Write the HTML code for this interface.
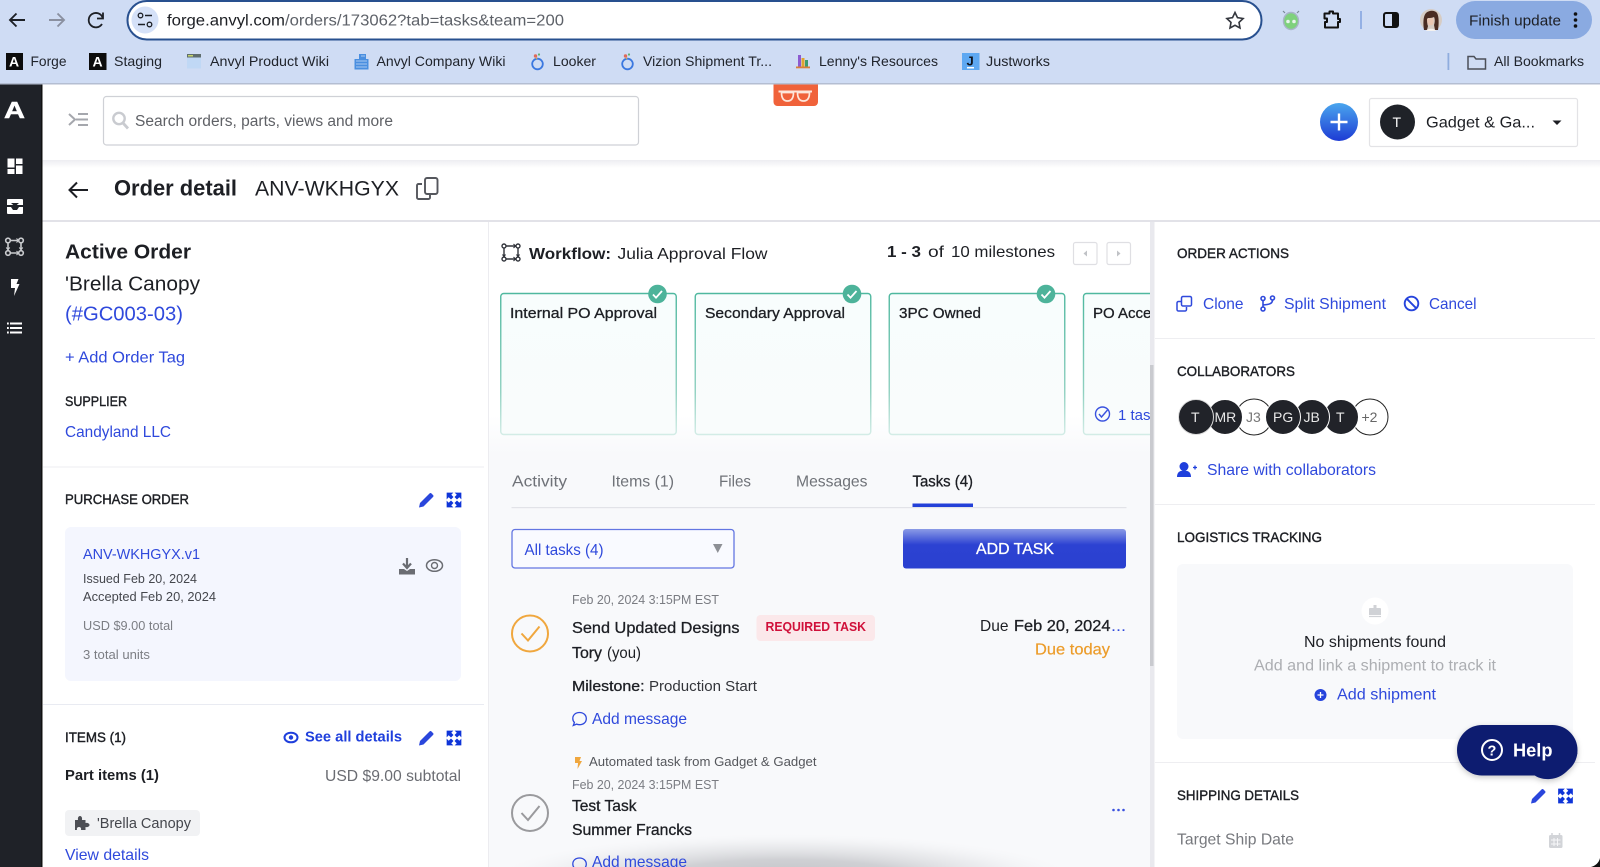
<!DOCTYPE html>
<html lang="en"><head><meta charset="utf-8"><title>Order detail</title>
<style>
html,body{margin:0;padding:0;background:#fff;width:1600px;height:867px;overflow:hidden}
.wrap{position:absolute;left:0;top:0;width:1600px;height:867px;overflow:hidden}
svg{display:block;filter:blur(.35px)}
text{font-family:"Liberation Sans",sans-serif;font-size:16px;fill:#1d1f24}
.b{font-weight:700}
.m{stroke:#1d1f24;stroke-width:.3px}
.bl{fill:#2f49dc}
.g{fill:#777}
.h{font-size:14px;fill:#1d1f24;stroke:#1d1f24;stroke-width:.4px}
.bm{font-size:14px;fill:#20242c}
.ab{fill:#0f40dc}
</style></head><body>
<div class="wrap">
<svg width="1600" height="867" viewBox="0 0 1600 867" xmlns="http://www.w3.org/2000/svg">
<defs>
<linearGradient id="pg" x1="0" y1="0" x2="0" y2="1"><stop offset="0" stop-color="#4aa6ee"/><stop offset="1" stop-color="#1d3bd4"/></linearGradient>
<linearGradient id="atg" x1="0" y1="0" x2="0" y2="1"><stop offset="0" stop-color="#8b9be6"/><stop offset=".4" stop-color="#2c42d2"/><stop offset="1" stop-color="#2a40d0"/></linearGradient>
<linearGradient id="cs" x1="0" y1="0" x2="0" y2="1"><stop offset="0" stop-color="#4fb89f"/><stop offset=".7" stop-color="#8fd0c0"/><stop offset="1" stop-color="#d3ece6"/></linearGradient>
<linearGradient id="cbg" x1="0" y1="0" x2="0" y2="1"><stop offset="0" stop-color="#fff"/><stop offset=".3" stop-color="#fff"/><stop offset=".36" stop-color="#f8f9fb"/><stop offset="1" stop-color="#f8f9fb"/></linearGradient>
<linearGradient id="cf" x1="0" y1="0" x2="0" y2="1"><stop offset="0" stop-color="#f8fdfd"/><stop offset="1" stop-color="#f9fcfc"/></linearGradient>
<linearGradient id="sh" x1="0" y1="0" x2="0" y2="1"><stop offset="0" stop-color="#e9e9ee"/><stop offset="1" stop-color="#fff"/></linearGradient>
<radialGradient id="blob" gradientUnits="userSpaceOnUse" cx="0" cy="0" r="1" gradientTransform="translate(785 880) scale(290 46)"><stop offset="0" stop-color="#bfc0c4"/><stop offset=".45" stop-color="#c8c9cd" stop-opacity=".85"/><stop offset=".75" stop-color="#dcdde0" stop-opacity=".45"/><stop offset="1" stop-color="#f0f0f2" stop-opacity="0"/></radialGradient>
<clipPath id="cc"><rect x="489" y="222" width="661" height="645"/></clipPath>
<filter id="hs" x="-20%" y="-30%" width="140%" height="170%"><feDropShadow dx="0" dy="2" stdDeviation="3" flood-color="#000" flood-opacity=".22"/></filter>
<g id="pencil"><path d="M0 15.500l1-4.500L10.500 1.500a1.400 1.400 0 0 1 2 0l1.500 1.500a1.400 1.400 0 0 1 0 2L4.500 14.500z" fill="#2a46dc"/></g>
<g id="expand" fill="#0f35d8" stroke="#0f35d8" stroke-width=".7"><path d="M0 0h5.500L3.800 1.700 6 4 4 6 1.700 3.800 0 5.500zM14 0v5.500L12.300 3.800 10 6 8 4 10.300 1.700 8.500 0zM0 14V8.500l1.700 1.700L4 8l2 2-2.200 2.300L5.500 14zM14 14H8.500l1.700-1.700L8 10l2-2 2.300 2.200L14 8.500z"/></g>
<g id="chk"><circle r="9.300" fill="#4db39a"/><path d="M-4.500 .5l3 3.200 6-6.700" fill="none" stroke="#fff" stroke-width="1.800"/></g>
<g id="chat"><path d="M7.500 1C3.500 1 .8 3.500 .8 7c0 1.600.6 3 1.600 4L1.300 14l3.300-1.400c.9.400 1.900.6 2.900.6 4 0 6.800-2.600 6.800-6.100S11.500 1 7.500 1z" fill="none" stroke="#2f49dc" stroke-width="1.300"/></g>
</defs>

<!-- page -->
<rect width="1600" height="867" fill="#fff"/>

<!-- browser chrome -->
<rect width="1600" height="84" fill="#cfdcf4"/>
<rect y="83" width="1600" height="1.500" fill="#b4bed2"/>
<rect x="127.500" y="1" width="1134" height="38.500" rx="19.250" fill="#fff" stroke="#28508f" stroke-width="2"/>
<path d="M25 20H10.500M16.500 13.500L10 20l6.500 6.500" fill="none" stroke="#1d2026" stroke-width="1.900"/>
<path d="M49 20H63.500M57.500 13.500L64 20l-6.500 6.500" fill="none" stroke="#8a90a0" stroke-width="1.900"/>
<path d="M102 24a7.200 7.200 0 1 1 .6-6.500M103 12.500v6h-6" fill="none" stroke="#1d2026" stroke-width="1.800"/>
<circle cx="145" cy="20" r="13.500" fill="#d5e1f8"/>
<circle cx="140.500" cy="15.500" r="2.300" fill="none" stroke="#1d2026" stroke-width="1.300"/><path d="M145 15.500h7M138 24.500h7" stroke="#1d2026" stroke-width="1.500"/><circle cx="149.500" cy="24.500" r="2.300" fill="none" stroke="#1d2026" stroke-width="1.300"/>
<text x="167" y="25.500" textLength="118" lengthAdjust="spacingAndGlyphs" style="font-size:15.500px" fill="#1d1f24">forge.anvyl.com</text>
<text x="285" y="25.500" textLength="279" lengthAdjust="spacingAndGlyphs" style="font-size:15.500px;fill:#5d6168">/orders/173062?tab=tasks&amp;team=200</text>
<path d="M1235 12.500l2.500 5.200 5.600.8-4.100 3.900 1 5.600-5-2.700-5 2.700 1-5.600-4.100-3.900 5.600-.8z" fill="none" stroke="#33363d" stroke-width="1.600"/>

<g>
<path d="M1285 13l-2-2M1297 13l2-2" stroke="#7a8a96" stroke-width="1.200"/>
<ellipse cx="1291" cy="21" rx="7.500" ry="8.500" fill="#7fd17d" stroke="#a8b4c8" stroke-width="1.400"/>
<circle cx="1288" cy="21.500" r="1.800" fill="#e8f4ec"/><circle cx="1294" cy="21.500" r="1.800" fill="#e8f4ec"/>
</g>
<path d="M1324.500 13.500h5v-2h3.500v2h5v5.500h2v3h-2v5.500h-13v-5.500h2v-3.500h-2.500z" fill="none" stroke="#111" stroke-width="2" stroke-linejoin="round"/>
<rect x="1360" y="11" width="2" height="18" fill="#94b0e4"/>
<rect x="1384" y="13" width="14" height="14" rx="2" fill="#cfdcf4" stroke="#111" stroke-width="2"/><rect x="1392" y="13" width="6" height="14" fill="#111"/>
<circle cx="1431" cy="20" r="11" fill="#d6ccc4"/>
<path d="M1424 30c-1-6-1-14 2-17s9-3 11 0 2 11 1 17h-3l-1-5c1-3 1-6 0-8-2 1-4 1-6 1-1 3-1 6 0 8l-1 4z" fill="#4a2c22"/>
<path d="M1427 18.500c1 0 4 0 6-1 1 2 1 4 0 7-1 1-4 1-5 0-1-2-1-4-1-6z" fill="#e9c6b2"/>
<path d="M1426 31c1-3 9-3 10 0z" fill="#f4f1ee"/>
<rect x="1456" y="1" width="136" height="38" rx="19" fill="#8aaae1"/>
<text x="1469" y="25.500" textLength="92" lengthAdjust="spacingAndGlyphs" style="font-size:15px" fill="#1d1f24">Finish update</text>
<circle cx="1575.500" cy="14" r="1.800" fill="#111"/><circle cx="1575.500" cy="20" r="1.800" fill="#111"/><circle cx="1575.500" cy="26" r="1.800" fill="#111"/>

<!-- bookmarks -->
<rect x="6" y="53" width="17" height="17" fill="#0c0c0c"/><text x="9" y="66.500" class="b" style="font-size:14px;fill:#fff">A</text>
<text x="30.500" y="66" class="bm" textLength="36" lengthAdjust="spacingAndGlyphs">Forge</text>
<rect x="89" y="53" width="17.500" height="17" fill="#0c0c0c"/><text x="92.500" y="66.500" class="b" style="font-size:14px;fill:#fff">A</text>
<text x="114" y="66" class="bm" textLength="48" lengthAdjust="spacingAndGlyphs">Staging</text>
<rect x="187" y="54" width="14" height="3.500" fill="#5f6d6d"/><rect x="187" y="57.500" width="14" height="11" fill="#c0d8f5"/><rect x="188" y="55" width="5" height="1.500" fill="#c4d46a"/>
<text x="210" y="66" class="bm" textLength="119" lengthAdjust="spacingAndGlyphs">Anvyl Product Wiki</text>
<rect x="359" y="54" width="7" height="15" fill="#4a8fe0"/><rect x="354.500" y="59" width="14" height="10.500" fill="#4a8fe0"/><path d="M356 61h11M356 64h11M356 67h11M361 56h4" stroke="#a9c9f1" stroke-width=".9"/>
<text x="376.500" y="66" class="bm" textLength="129" lengthAdjust="spacingAndGlyphs">Anvyl Company Wiki</text>
<circle cx="537.500" cy="64" r="5.300" fill="none" stroke="#3b78e0" stroke-width="1.800"/><circle cx="535.500" cy="56" r="1.700" fill="#e06b5a"/><circle cx="539" cy="54.500" r="1.100" fill="#5bb36a"/><path d="M536 58l1 1" stroke="#e2a93b" stroke-width="1.300"/>
<text x="553" y="66" class="bm" textLength="43" lengthAdjust="spacingAndGlyphs">Looker</text>
<circle cx="627.500" cy="64" r="5.300" fill="none" stroke="#3b78e0" stroke-width="1.800"/><circle cx="625.500" cy="56" r="1.700" fill="#e06b5a"/><circle cx="629" cy="54.500" r="1.100" fill="#5bb36a"/><path d="M626 58l1 1" stroke="#e2a93b" stroke-width="1.300"/>
<text x="643" y="66" class="bm" textLength="129" lengthAdjust="spacingAndGlyphs">Vizion Shipment Tr...</text>
<rect x="798" y="55" width="3" height="12" fill="#8c5bd0"/><rect x="801.500" y="58" width="3" height="9" fill="#e0a42e"/><rect x="805" y="60" width="3" height="7" fill="#3f9b6f"/><rect x="796" y="66.500" width="14" height="1.800" fill="#d87f3a"/>
<text x="819" y="66" class="bm" textLength="119" lengthAdjust="spacingAndGlyphs">Lenny's Resources</text>
<rect x="962" y="53" width="17.500" height="17" fill="#5ea8f2"/><text x="966.500" y="65.500" class="b" style="font-size:13px;fill:#10141d">J</text><rect x="967" y="67" width="7" height="1.500" fill="#fff"/>
<text x="986" y="66" class="bm" textLength="64" lengthAdjust="spacingAndGlyphs">Justworks</text>
<rect x="1447.500" y="53" width="1.800" height="17" fill="#8fadde"/>
<path d="M1468 56.500h6l2 2.500h9.500v10H1468z" fill="none" stroke="#4b4f58" stroke-width="1.500"/>
<text x="1494" y="66" class="bm" textLength="90" lengthAdjust="spacingAndGlyphs">All Bookmarks</text>

<!-- sidebar -->
<rect x="0" y="84.500" width="42" height="783" fill="#1f2228"/>
<rect x="41" y="84.500" width="1.500" height="783" fill="#111"/>
<text x="4" y="118" class="b" style="font-size:23px;fill:#fff;stroke:#fff;stroke-width:.5px" textLength="21" lengthAdjust="spacingAndGlyphs">A</text>
<path d="M7.500 158.500h7v9h-7zM16 158.500h6.500v5.500H16zM16 165.500h6.500v8.500H16zM7.500 169h7v5h-7z" fill="#fff"/>
<path d="M8 199h14a1 1 0 0 1 1 1v5H7v-5a1 1 0 0 1 1-1zM7 207h4l2 3h4l2-3h4v6a1 1 0 0 1-1 1H8a1 1 0 0 1-1-1z" fill="#fff"/><path d="M11 203h8l-4 3.500z" fill="#1f2228"/>
<g fill="none" stroke="#c9cbce" stroke-width="1.600"><circle cx="8" cy="240.500" r="2.300"/><circle cx="21" cy="240.500" r="2.300"/><circle cx="8" cy="253" r="2.300"/><circle cx="21" cy="253" r="2.300"/><path d="M10.500 240.500h8M10.500 253h8M8 243v7.500M21 243v7.500"/><path d="M16.500 238.500l2 2-2 2M16.500 251l2 2-2 2M6.200 247.500l1.800 2 1.800-2M19.200 247.500l1.800 2 1.800-2" stroke-width="1.100"/></g>
<path d="M11 279h7.500l-2 5h3L14 296l1-8h-4z" fill="#fff"/>
<path d="M10 323.500h12M10 328h12M10 332.500h12" stroke="#fff" stroke-width="2"/><path d="M7 323.500h1.800M7 328h1.800M7 332.500h1.800" stroke="#fff" stroke-width="2"/>

<!-- top bar -->
<rect x="42.500" y="160" width="1557.500" height="8" fill="url(#sh)" opacity=".8"/>
<path d="M69 114l6 5.500-6 5.500" fill="none" stroke="#a5a7ad" stroke-width="2"/><path d="M78 114h10M76 119.500h12M78 125h10" stroke="#a5a7ad" stroke-width="2"/>
<rect x="103.500" y="96.500" width="535" height="48.500" rx="3" fill="#fff" stroke="#cfd1d6" stroke-width="1.200"/>
<circle cx="119" cy="118.500" r="5.700" fill="none" stroke="#c9cbd0" stroke-width="2.400"/><path d="M123 123l5 5.500" stroke="#c9cbd0" stroke-width="2.800"/>
<text x="135" y="126" textLength="258" lengthAdjust="spacingAndGlyphs" style="font-size:15.500px;fill:#5f6166">Search orders, parts, views and more</text>
<path d="M773.500 84.500h44.500v17.500a4 4 0 0 1-4 4h-36.500a4 4 0 0 1-4-4z" fill="#f0623a"/>
<g fill="none" stroke="#fde6da" stroke-width="1.700"><path d="M781.500 92.500h12c0 5-1.500 8.500-6 8.500s-6-3.500-6-8.500zM797.500 92.500h12c0 5-1.500 8.500-6 8.500s-6-3.500-6-8.500z"/></g><path d="M778.500 90.500h33.500v2h-33.500z" fill="#fde6da"/>

<circle cx="1339" cy="122" r="19" fill="url(#pg)"/><path d="M1339 113.500v17M1330.500 122h17" stroke="#fff" stroke-width="2.400"/>
<rect x="1369.500" y="98.500" width="208" height="48" rx="2" fill="#fff" stroke="#e3e3e6" stroke-width="1.200"/>
<circle cx="1397.500" cy="122" r="17.500" fill="#1f2228"/><text x="1392.500" y="127" style="font-size:14px;fill:#fff">T</text>
<text x="1426" y="127.500" textLength="109" lengthAdjust="spacingAndGlyphs" style="font-size:16px">Gadget &amp; Ga...</text>
<path d="M1552.500 120.500h9l-4.500 4.500z" fill="#1d1f24"/>

<!-- detail header -->
<path d="M88 190H70M77 182.500L69.500 190l7.500 7.500" fill="none" stroke="#1d1f24" stroke-width="2"/>
<text x="114" y="195.500" class="b" textLength="123" lengthAdjust="spacingAndGlyphs" style="font-size:22px">Order detail</text>
<text x="255" y="195.500" textLength="144" lengthAdjust="spacingAndGlyphs" style="font-size:21.500px">ANV-WKHGYX</text>
<path d="M422 184h-3.500a1.500 1.500 0 0 0-1.500 1.500v12a1.500 1.500 0 0 0 1.500 1.500h10a1.500 1.500 0 0 0 1.500-1.500v-3" fill="none" stroke="#55575d" stroke-width="1.900"/><rect x="425" y="178" width="12.500" height="16" rx="2" fill="#fff" stroke="#55575d" stroke-width="1.900"/>
<rect x="42.500" y="220" width="1557.500" height="2" fill="#e2e2e8"/>
<rect x="488" y="222" width="1" height="645" fill="#ececf0"/>

<!-- left column -->
<text x="65" y="258.500" class="b" textLength="126" lengthAdjust="spacingAndGlyphs" style="font-size:20px">Active Order</text>
<text x="65" y="290.500" textLength="135" lengthAdjust="spacingAndGlyphs" style="font-size:20.500px">'Brella Canopy</text>
<text x="65" y="320.500" class="bl" textLength="118" lengthAdjust="spacingAndGlyphs" style="font-size:20.500px">(#GC003-03)</text>
<text x="65" y="362.500" class="bl" textLength="120" lengthAdjust="spacingAndGlyphs">+ Add Order Tag</text>
<text x="65" y="406" class="h" textLength="62" lengthAdjust="spacingAndGlyphs">SUPPLIER</text>
<text x="65" y="437" class="bl" textLength="106" lengthAdjust="spacingAndGlyphs">Candyland LLC</text>
<rect x="43" y="466.500" width="441" height="1" fill="#ededf0"/>
<text x="65" y="504" class="h" textLength="124" lengthAdjust="spacingAndGlyphs">PURCHASE ORDER</text>
<use href="#pencil" x="419" y="492"/><use href="#expand" x="447" y="493"/>
<rect x="65" y="527" width="396" height="154" rx="6" fill="#f4f6fe"/>
<text x="83" y="559" class="bl" textLength="117" lengthAdjust="spacingAndGlyphs" style="font-size:15px">ANV-WKHGYX.v1</text>
<text x="83" y="583" textLength="114" lengthAdjust="spacingAndGlyphs" style="font-size:13px;fill:#45474d">Issued Feb 20, 2024</text>
<text x="83" y="601" textLength="133" lengthAdjust="spacingAndGlyphs" style="font-size:13px;fill:#45474d">Accepted Feb 20, 2024</text>
<text x="83" y="630" textLength="90" lengthAdjust="spacingAndGlyphs" style="font-size:13px;fill:#7c7e84">USD $9.00 total</text>
<text x="83" y="659" textLength="67" lengthAdjust="spacingAndGlyphs" style="font-size:13px;fill:#7c7e84">3 total units</text>
<path d="M407 558v9M403 563.500l4 4.500 4-4.500" fill="none" stroke="#6a6c72" stroke-width="2.200"/><path d="M399 569h5l3 2 3-2h5v5.500h-16z" fill="#6a6c72"/>
<ellipse cx="434.500" cy="565.500" rx="8" ry="5.800" fill="none" stroke="#6a6c72" stroke-width="1.500"/><circle cx="434.500" cy="565.500" r="3" fill="none" stroke="#6a6c72" stroke-width="1.400"/>
<rect x="43" y="704" width="441" height="1" fill="#e9ebf2"/>
<text x="65" y="742" class="h" textLength="61" lengthAdjust="spacingAndGlyphs">ITEMS (1)</text>
<ellipse cx="291" cy="737.500" rx="6.500" ry="4.800" fill="none" stroke="#1f3fdc" stroke-width="2"/><circle cx="291" cy="737.500" r="2.200" fill="#1f3fdc"/>
<text x="305" y="741.500" class="b" textLength="97" lengthAdjust="spacingAndGlyphs" style="font-size:14.500px;fill:#1f3fdc">See all details</text>
<use href="#pencil" x="419" y="730"/><use href="#expand" x="447" y="731"/>
<text x="65" y="780" class="b" textLength="94" lengthAdjust="spacingAndGlyphs" style="font-size:14.500px">Part items (1)</text>
<text x="325" y="781" textLength="136" lengthAdjust="spacingAndGlyphs" style="fill:#6a6c72">USD $9.00 subtotal</text>
<rect x="65" y="810" width="135" height="26" rx="4" fill="#f1f2f4"/>
<path d="M75 820h3c-.5-3 1-4 2-4s2.500 1 2 4h3.500v3c2-.5 4 .5 4 2s-2 2.500-4 2v3H81c.5-2-.5-3-2-3s-2.500 1-2 3h-2z" fill="#4d4f55"/>
<text x="97" y="828" textLength="94" lengthAdjust="spacingAndGlyphs" style="font-size:15px;fill:#44464c">'Brella Canopy</text>
<text x="65" y="860" class="bl" textLength="84" lengthAdjust="spacingAndGlyphs">View details</text>

<!-- center column -->
<rect x="489" y="222" width="661" height="645" fill="url(#cbg)"/>
<g fill="none" stroke="#30333a" stroke-width="1.400"><circle cx="504" cy="246" r="2"/><circle cx="518" cy="246" r="2"/><circle cx="504" cy="259" r="2"/><circle cx="518" cy="259" r="2"/><path d="M506.500 246h9M506.500 259h9M504 248.500v8M518 248.500v8"/><path d="M513.500 244l2 2-2 2M513.500 257l2 2-2 2M502.500 254.500l1.500 2 1.500-2M516.500 254.500l1.500 2 1.500-2" stroke-width="1.100"/></g>
<text x="529" y="259" class="b" textLength="82" lengthAdjust="spacingAndGlyphs">Workflow:</text>
<text x="617.500" y="259" textLength="150" lengthAdjust="spacingAndGlyphs">Julia Approval Flow</text>
<text x="887" y="257" class="b" textLength="34" lengthAdjust="spacingAndGlyphs">1 - 3</text>
<text x="928" y="257" textLength="16" lengthAdjust="spacingAndGlyphs">of</text>
<text x="951" y="257" textLength="104" lengthAdjust="spacingAndGlyphs">10 milestones</text>
<rect x="1073.500" y="242.500" width="23.500" height="22" rx="2" fill="#fff" stroke="#dfdfe3" stroke-width="1.200"/><path d="M1087 250.500v6l-3.500-3z" fill="#c0c2c6"/>
<rect x="1107" y="242.500" width="23.500" height="22" rx="2" fill="#fff" stroke="#dfdfe3" stroke-width="1.200"/><path d="M1117 250.500v6l3.500-3z" fill="#c0c2c6"/>
<g clip-path="url(#cc)">
<rect x="500.750" y="293.500" width="175.500" height="141" rx="3" fill="url(#cf)" stroke="url(#cs)" stroke-width="1.400"/>
<rect x="695.250" y="293.500" width="175.500" height="141" rx="3" fill="url(#cf)" stroke="url(#cs)" stroke-width="1.400"/>
<rect x="889.250" y="293.500" width="175.500" height="141" rx="3" fill="url(#cf)" stroke="url(#cs)" stroke-width="1.400"/>
<rect x="1083.500" y="293.500" width="175.500" height="141" rx="3" fill="url(#cf)" stroke="url(#cs)" stroke-width="1.400"/>
<text x="1093" y="318" class="m" style="font-size:15px">PO Acceptance</text>
<circle cx="1102.500" cy="414" r="7" fill="none" stroke="#3a52df" stroke-width="1.400"/><path d="M1099 414l2.500 3 6-7" fill="none" stroke="#3a52df" stroke-width="1.400"/>
<text x="1118" y="420" class="bl" style="font-size:15px">1 task</text>
</g>
<use href="#chk" x="657.500" y="294"/><use href="#chk" x="852" y="294"/><use href="#chk" x="1046" y="294"/>
<text x="510" y="318" class="m" textLength="147" lengthAdjust="spacingAndGlyphs" style="font-size:15px">Internal PO Approval</text>
<text x="705" y="318" class="m" textLength="140" lengthAdjust="spacingAndGlyphs" style="font-size:15px">Secondary Approval</text>
<text x="899" y="318" class="m" textLength="82" lengthAdjust="spacingAndGlyphs" style="font-size:15px">3PC Owned</text>

<g style="font-size:16px">
<text x="512" y="486.500" textLength="55" lengthAdjust="spacingAndGlyphs" style="fill:#6f7278">Activity</text>
<text x="611.500" y="486.500" textLength="62.500" lengthAdjust="spacingAndGlyphs" style="fill:#6f7278">Items (1)</text>
<text x="719" y="486.500" textLength="32" lengthAdjust="spacingAndGlyphs" style="fill:#6f7278">Files</text>
<text x="796" y="486.500" textLength="71.500" lengthAdjust="spacingAndGlyphs" style="fill:#6f7278">Messages</text>
<text x="912.500" y="486.500" textLength="60.500" lengthAdjust="spacingAndGlyphs" class="m">Tasks (4)</text>
</g>
<rect x="511.500" y="507" width="615" height="1.200" fill="#e2e3e8"/>
<rect x="912.500" y="503.500" width="60.500" height="3.500" fill="#2340d8"/>

<rect x="512" y="529.500" width="222" height="38.500" rx="3" fill="#f9faff" stroke="#6376e2" stroke-width="1.300"/>
<text x="524.500" y="555" class="bl" textLength="79" lengthAdjust="spacingAndGlyphs">All tasks (4)</text>
<path d="M713 544h9.500l-4.750 9z" fill="#8d8f95"/>
<rect x="903" y="529" width="223" height="39.500" rx="3" fill="url(#atg)"/>
<text x="976" y="554" textLength="78" lengthAdjust="spacingAndGlyphs" style="font-size:16px;fill:#fff;stroke:#fff;stroke-width:.3px">ADD TASK</text>

<text x="572" y="604" textLength="147" lengthAdjust="spacingAndGlyphs" style="font-size:13px;fill:#7a7c82">Feb 20, 2024 3:15PM EST</text>
<circle cx="530" cy="633.500" r="18" fill="none" stroke="#f0a73e" stroke-width="2"/><path d="M521.500 633.500l6.500 7 11.500-14" fill="none" stroke="#f0a73e" stroke-width="2"/>
<text x="572" y="633" class="m" textLength="167.500" lengthAdjust="spacingAndGlyphs">Send Updated Designs</text>
<rect x="756.500" y="615" width="118.500" height="26" rx="4" fill="#fbe8ea"/>
<text x="765.500" y="631" class="b" textLength="100.500" lengthAdjust="spacingAndGlyphs" style="font-size:12.500px;fill:#d0103a">REQUIRED TASK</text>
<text x="980" y="631" textLength="28.500" lengthAdjust="spacingAndGlyphs">Due</text>
<text x="1014" y="631" class="m" textLength="96.500" lengthAdjust="spacingAndGlyphs">Feb 20, 2024</text>
<text x="1111" y="631" class="bl" textLength="15" lengthAdjust="spacingAndGlyphs">...</text>
<text x="1035" y="654.500" textLength="75" lengthAdjust="spacingAndGlyphs" style="fill:#ec9c2a;stroke:#ec9c2a;stroke-width:.2px">Due today</text>
<text x="572" y="658" class="m" textLength="30" lengthAdjust="spacingAndGlyphs">Tory</text>
<text x="607" y="658" textLength="34" lengthAdjust="spacingAndGlyphs">(you)</text>
<text x="572" y="691" class="m" textLength="72.500" lengthAdjust="spacingAndGlyphs" style="font-size:14.500px">Milestone:</text>
<text x="649" y="691" textLength="108" lengthAdjust="spacingAndGlyphs" style="font-size:14.500px;fill:#33353a">Production Start</text>
<use href="#chat" x="572" y="711.500"/>
<text x="592" y="724" class="bl" textLength="95" lengthAdjust="spacingAndGlyphs">Add message</text>
<path d="M575 757h6l-1.500 4h2.500l-4.500 8 .5-6H575z" fill="#f0a73e"/>
<text x="589" y="766" textLength="227.500" lengthAdjust="spacingAndGlyphs" style="font-size:12.500px;fill:#55575c">Automated task from Gadget &amp; Gadget</text>
<text x="572" y="789" textLength="147" lengthAdjust="spacingAndGlyphs" style="font-size:13px;fill:#7a7c82">Feb 20, 2024 3:15PM EST</text>
<circle cx="530" cy="813" r="18" fill="none" stroke="#9a9a9d" stroke-width="2"/><path d="M521.500 813l6.500 7 11.500-14" fill="none" stroke="#9a9a9d" stroke-width="2"/>
<text x="572" y="811" class="m" textLength="64.500" lengthAdjust="spacingAndGlyphs">Test Task</text>
<text x="572" y="835" class="m" textLength="120" lengthAdjust="spacingAndGlyphs">Summer Francks</text>
<circle cx="1113.500" cy="810" r="1.300" fill="#3a52df"/><circle cx="1118.500" cy="810" r="1.300" fill="#3a52df"/><circle cx="1123.500" cy="810" r="1.300" fill="#3a52df"/>
<rect x="495" y="834" width="580" height="33" fill="url(#blob)"/>
<use href="#chat" x="572" y="857"/>
<text x="592" y="867" class="bl" textLength="95" lengthAdjust="spacingAndGlyphs">Add message</text>

<!-- right column -->
<rect x="1150" y="222" width="4.500" height="645" fill="#e9e9ee"/>
<rect x="1150" y="365" width="3.500" height="301" fill="#c9cacf"/>
<text x="1177" y="258" class="h" textLength="112" lengthAdjust="spacingAndGlyphs">ORDER ACTIONS</text>
<path d="M1181 301.500h-2.500a1.500 1.500 0 0 0-1.500 1.500v6.500a1.500 1.500 0 0 0 1.500 1.500h6.500a1.500 1.500 0 0 0 1.500-1.500V307" fill="none" stroke="#2f49dc" stroke-width="1.500"/><rect x="1181.500" y="296.500" width="10" height="9.500" rx="1.500" fill="none" stroke="#2f49dc" stroke-width="1.500"/>
<text x="1203" y="309" class="bl" textLength="40.500" lengthAdjust="spacingAndGlyphs">Clone</text>
<g fill="none" stroke="#2f49dc" stroke-width="1.600"><circle cx="1263" cy="298.500" r="2"/><circle cx="1272.500" cy="298" r="2"/><circle cx="1263" cy="309" r="2"/><path d="M1263 300.500v6.500M1272.500 300c0 4-4 4.500-9.500 5"/></g>
<text x="1284" y="309" class="bl" textLength="102" lengthAdjust="spacingAndGlyphs">Split Shipment</text>
<circle cx="1411.500" cy="303.500" r="6.800" fill="none" stroke="#2644dc" stroke-width="1.900"/><path d="M1406.700 298.700l9.600 9.600" stroke="#2644dc" stroke-width="1.900"/>
<text x="1429" y="309" class="bl" textLength="47.500" lengthAdjust="spacingAndGlyphs">Cancel</text>
<rect x="1155" y="338" width="440" height="1" fill="#eeeef1"/>
<text x="1177" y="376" class="h" textLength="118" lengthAdjust="spacingAndGlyphs">COLLABORATORS</text>
<g>
<circle cx="1370" cy="417" r="18" fill="#fff" stroke="#222" stroke-width="1"/><text x="1361.500" y="422" style="font-size:14px;fill:#666">+2</text>
<circle cx="1341" cy="417" r="17.500" fill="#212329" stroke="#fff" stroke-width="1"/><text x="1336" y="422" style="font-size:14px;fill:#e8e8e8">T</text>
<circle cx="1312" cy="417" r="17.500" fill="#212329" stroke="#fff" stroke-width="1"/><text x="1303.500" y="422" style="font-size:14px;fill:#e8e8e8">JB</text>
<circle cx="1254" cy="417" r="18" fill="#fff" stroke="#222" stroke-width="1"/><text x="1246" y="422" style="font-size:14px;fill:#777">J3</text>
<circle cx="1283" cy="417" r="17.500" fill="#212329" stroke="#fff" stroke-width="1"/><text x="1273" y="422" style="font-size:14px;fill:#e8e8e8">PG</text>
<circle cx="1225" cy="417" r="17.500" fill="#212329" stroke="#fff" stroke-width="1"/><text x="1214.500" y="422" style="font-size:14px;fill:#e8e8e8">MR</text>
<circle cx="1196" cy="417" r="17.500" fill="#212329" stroke="#ddd" stroke-width="1"/><text x="1191" y="422" style="font-size:14px;fill:#e8e8e8">T</text>
</g>
<circle cx="1184" cy="466.500" r="4.500" fill="#1f3fdc"/><path d="M1177 477c0-5 3-6.500 7-6.500s7 1.500 7 6.500z" fill="#1f3fdc"/><path d="M1193 467.500h4M1195 465.500v4" stroke="#1f3fdc" stroke-width="1.300"/>
<text x="1207" y="475" class="bl" textLength="169" lengthAdjust="spacingAndGlyphs">Share with collaborators</text>
<rect x="1155" y="504" width="440" height="1" fill="#eeeef1"/>
<text x="1177" y="542" class="h" textLength="145" lengthAdjust="spacingAndGlyphs">LOGISTICS TRACKING</text>
<rect x="1177" y="564" width="396" height="175" rx="6" fill="#f8f9fb"/>
<circle cx="1375" cy="611" r="13.500" fill="#fff"/>
<path d="M1370 608h10a1 1 0 0 1 1 1v6h-12v-6a1 1 0 0 1 1-1zM1373.500 605h3v3h-3z" fill="#d0d2d6"/><path d="M1369 616.500h12" stroke="#d0d2d6" stroke-width="1.200"/>
<text x="1304" y="647" textLength="142" lengthAdjust="spacingAndGlyphs">No shipments found</text>
<text x="1254" y="670.500" textLength="242" lengthAdjust="spacingAndGlyphs" style="fill:#acaeb2">Add and link a shipment to track it</text>
<circle cx="1320.500" cy="695" r="6" fill="#2644dc"/><path d="M1320.500 692v6M1317.500 695h6" stroke="#fff" stroke-width="1.300"/>
<text x="1337" y="699.500" class="bl" textLength="99" lengthAdjust="spacingAndGlyphs">Add shipment</text>
<rect x="1155" y="762" width="440" height="1" fill="#eeeef1"/>
<text x="1177" y="800" class="h" textLength="122" lengthAdjust="spacingAndGlyphs">SHIPPING DETAILS</text>
<use href="#pencil" x="1531" y="788"/><use href="#expand" x="1558.500" y="789"/>
<text x="1177" y="844.500" textLength="117" lengthAdjust="spacingAndGlyphs" style="fill:#77797e">Target Ship Date</text>
<rect x="1549" y="835" width="13.500" height="13" rx="1.500" fill="#d2d4d8"/><path d="M1552 833v3M1559.500 833v3" stroke="#d2d4d8" stroke-width="1.500"/><path d="M1551 840h9.500M1551 844h9.500M1554 838v8M1557.500 838v8" stroke="#f6f6f8" stroke-width="1"/>

<!-- help -->
<g filter="url(#hs)"><rect x="1457" y="725" width="120.500" height="50.500" rx="25" fill="#111f70"/><path d="M1534 775c4 3 10 4.500 16 4 13-1 22-10 27.500-26z" fill="#111f70"/></g>
<circle cx="1492" cy="750" r="10" fill="none" stroke="#fff" stroke-width="2"/>
<text x="1487.500" y="755.500" class="b" style="font-size:14.500px;fill:#fff">?</text>
<text x="1513" y="756.500" class="b" textLength="39.500" lengthAdjust="spacingAndGlyphs" style="font-size:18px;fill:#fff">Help</text>
<path d="M1600 858v9h-9c4-1 8-4 9-9z" fill="#111"/>
</svg>
</div>
</body></html>
